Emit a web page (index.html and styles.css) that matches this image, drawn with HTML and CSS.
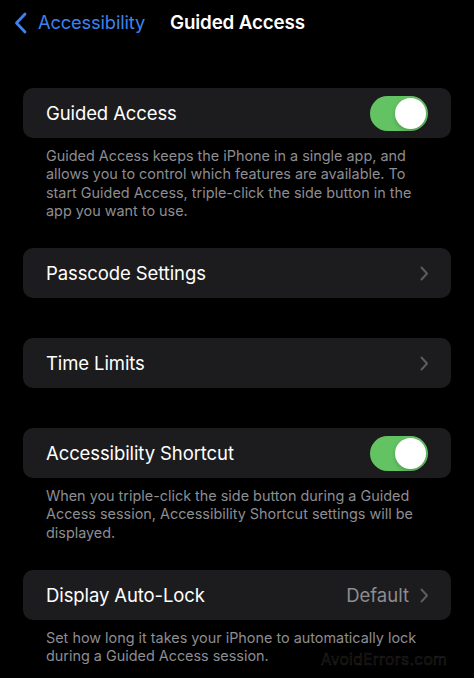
FILE: index.html
```html
<!DOCTYPE html>
<html lang="en">
<head>
  <meta charset="UTF-8" />
  <meta name="viewport" content="width=device-width, initial-scale=1.0"/>
  <title>Guided Access</title>
  <link rel="stylesheet" href="styles.css">
</head>
<body>
  <div class="screen">
    <header class="nav">
      <a class="back" href="#">
        <svg class="back-icon" width="13" height="22" viewBox="0 0 13 22">
          <path d="M11 2 L2.5 11 L11 20" fill="none" stroke="currentColor" stroke-width="2.8" stroke-linecap="round" stroke-linejoin="round"/>
        </svg>
        <span>Accessibility</span>
      </a>
      <h1 class="title">Guided Access</h1>
    </header>

    <main class="content">
      <section class="group">
        <div class="card">
          <span class="label">Guided Access</span>
          <span class="switch on"><span class="knob"></span></span>
        </div>
        <p class="footer">Guided Access keeps the iPhone in a single app, and allows you to control which features are available. To start Guided Access, triple-click the side button in the app you want to use.</p>
      </section>

      <section class="group">
        <div class="card">
          <span class="label">Passcode Settings</span>
          <span class="chevron">
            <svg width="9" height="15" viewBox="0 0 9 15"><path d="M1.5 1.5 L7 7.5 L1.5 13.5" fill="none" stroke="currentColor" stroke-width="2" stroke-linecap="round" stroke-linejoin="round"/></svg>
          </span>
        </div>
      </section>

      <section class="group">
        <div class="card">
          <span class="label">Time Limits</span>
          <span class="chevron">
            <svg width="9" height="15" viewBox="0 0 9 15"><path d="M1.5 1.5 L7 7.5 L1.5 13.5" fill="none" stroke="currentColor" stroke-width="2" stroke-linecap="round" stroke-linejoin="round"/></svg>
          </span>
        </div>
      </section>

      <section class="group">
        <div class="card">
          <span class="label">Accessibility Shortcut</span>
          <span class="switch on"><span class="knob"></span></span>
        </div>
        <p class="footer">When you triple-click the side button during a Guided Access session, Accessibility Shortcut settings will be displayed.</p>
      </section>

      <section class="group">
        <div class="card">
          <span class="label">Display Auto-Lock</span>
          <span class="value">Default</span>
          <span class="chevron">
            <svg width="9" height="15" viewBox="0 0 9 15"><path d="M1.5 1.5 L7 7.5 L1.5 13.5" fill="none" stroke="currentColor" stroke-width="2" stroke-linecap="round" stroke-linejoin="round"/></svg>
          </span>
        </div>
        <p class="footer">
          <span class="line">Set how long it takes your iPhone to automatically lock</span>
          <span class="line">during a Guided Access session.</span>
        </p>
      </section>
    </main>

    <div class="watermark">AvoidErrors.com</div>
  </div>
</body>
</html>
```

FILE: styles.css
```css
* {
  box-sizing: border-box;
  margin: 0;
  padding: 0;
  font-family: Inter, 'Noto Sans', sans-serif;
}

body {
  background-color: #000;
  color: #fff;
}

.screen {
  position: relative;
  width: 474px;
  height: 678px;
  overflow: hidden;
}

/* top navigation bar */
.nav {
  display: flex;
  align-items: center;
  height: 44px;
  padding: 0 0 0 14px;
}

.back {
  display: flex;
  align-items: center;
  gap: 11px;
  color: #3d82ee;
  text-decoration: none;
  font-size: 18.3px;
  letter-spacing: -0.15px;
}

.back-icon {
  margin-top: 1px;
}

.title {
  margin-left: 25px;
  font-size: 18.8px;
  font-weight: 600;
  letter-spacing: -0.15px;
}

.content {
  padding: 44px 23px 0;
}

.group {
  margin-bottom: 40px;
}

.group:has(.footer) {
  margin-bottom: 28px;
}

.card {
  display: flex;
  align-items: center;
  height: 50px;
  padding: 0 23px;
  background-color: #1c1c1e;
  border-radius: 10px;
}

.label {
  flex: 1;
  font-size: 18.5px;
  letter-spacing: -0.1px;
}

.value {
  font-size: 18.5px;
  color: #8d8d92;
  margin-right: 11px;
}

.chevron {
  display: flex;
  color: #5c5c60;
  margin-right: -1px;
}

/* toggle switch */
.switch {
  display: flex;
  align-items: center;
  justify-content: flex-end;
  width: 58px;
  height: 35px;
  padding: 2px;
  border-radius: 18px;
  background-color: #39393d;
}

.switch.on {
  background-color: #63c363;
}

.knob {
  width: 31px;
  height: 31px;
  border-radius: 50%;
  background-color: #fff;
  box-shadow: 0 2px 4px rgba(0,0,0,0.2);
}

.footer {
  padding: 9px 23px 0;
  font-size: 14.4px;
  line-height: 18.3px;
  color: #8d8d92;
}

.footer .line {
  display: block;
  width: fit-content;
}

.watermark {
  position: absolute;
  right: 27px;
  bottom: 9px;
  font-size: 15.6px;
  color: rgba(255,255,255,0.04);
  -webkit-text-stroke: 0.5px rgba(140,140,140,0.28);
  letter-spacing: 0.3px;
}
```
